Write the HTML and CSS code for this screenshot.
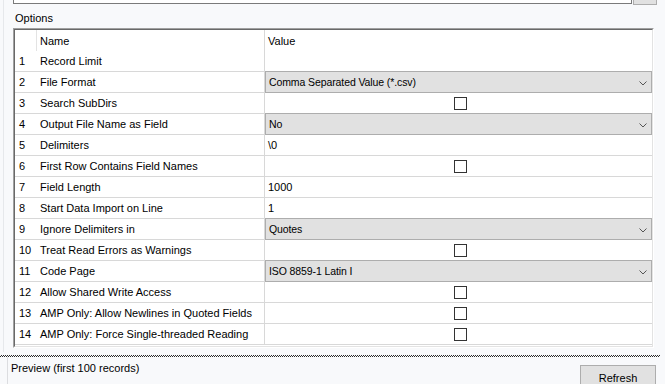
FILE: index.html
```html
<!DOCTYPE html>
<html>
<head>
<meta charset="utf-8">
<link rel="stylesheet" href="styles.css">
</head>
<body>
<div class="upper">
  <div class="topbar">
    <div class="tb-input"></div>
    <div class="tb-btn"></div>
  </div>
  <div class="options-label">Options</div>
  <div class="grid">
    <div class="grid-inner">
      <div class="row head">
        <div class="num"></div>
        <div class="name">Name</div>
        <div class="val">Value</div>
      </div>
      <div class="row"><div class="num">1</div><div class="name">Record Limit</div><div class="val"></div></div>
      <div class="row"><div class="num">2</div><div class="name">File Format</div><div class="combo"><span>Comma Separated Value (*.csv)</span><svg class="chev" width="8" height="5" viewBox="0 0 8 5"><path d="M0.5 0.5 L4 4 L7.5 0.5" fill="none" stroke="#555" stroke-width="1"/></svg></div></div>
      <div class="row"><div class="num">3</div><div class="name">Search SubDirs</div><div class="val center"><span class="check"></span></div></div>
      <div class="row"><div class="num">4</div><div class="name">Output File Name as Field</div><div class="combo"><span>No</span><svg class="chev" width="8" height="5" viewBox="0 0 8 5"><path d="M0.5 0.5 L4 4 L7.5 0.5" fill="none" stroke="#555" stroke-width="1"/></svg></div></div>
      <div class="row"><div class="num">5</div><div class="name">Delimiters</div><div class="val">\0</div></div>
      <div class="row"><div class="num">6</div><div class="name">First Row Contains Field Names</div><div class="val center"><span class="check"></span></div></div>
      <div class="row"><div class="num">7</div><div class="name">Field Length</div><div class="val">1000</div></div>
      <div class="row"><div class="num">8</div><div class="name">Start Data Import on Line</div><div class="val">1</div></div>
      <div class="row"><div class="num">9</div><div class="name">Ignore Delimiters in</div><div class="combo"><span>Quotes</span><svg class="chev" width="8" height="5" viewBox="0 0 8 5"><path d="M0.5 0.5 L4 4 L7.5 0.5" fill="none" stroke="#555" stroke-width="1"/></svg></div></div>
      <div class="row"><div class="num">10</div><div class="name">Treat Read Errors as Warnings</div><div class="val center"><span class="check"></span></div></div>
      <div class="row"><div class="num">11</div><div class="name">Code Page</div><div class="combo"><span>ISO 8859-1 Latin I</span><svg class="chev" width="8" height="5" viewBox="0 0 8 5"><path d="M0.5 0.5 L4 4 L7.5 0.5" fill="none" stroke="#555" stroke-width="1"/></svg></div></div>
      <div class="row"><div class="num">12</div><div class="name">Allow Shared Write Access</div><div class="val center"><span class="check"></span></div></div>
      <div class="row"><div class="num">13</div><div class="name">AMP Only: Allow Newlines in Quoted Fields</div><div class="val center"><span class="check"></span></div></div>
      <div class="row"><div class="num">14</div><div class="name">AMP Only: Force Single-threaded Reading</div><div class="val center"><span class="check"></span></div></div>
    </div>
  </div>
</div>
<div class="splitter"></div>
<div class="lower">
  <div class="preview-label">Preview (first 100 records)</div>
  <div class="refresh">Refresh</div>
</div>
</body>
</html>
```

FILE: styles.css
```css
html, body {
  margin: 0;
  padding: 0;
}
body {
  background: #f8f9fb;
  font-family: "Liberation Sans", Arial, sans-serif;
  font-size: 11px;
  color: #000;
  width: 665px;
  height: 384px;
  overflow: hidden;
}
.upper {
  margin-left: 3px;
  border-left: 1px solid #e6e8eb;
  height: 352px;
}
.topbar {
  display: flex;
  height: 5px;
  padding-left: 9px;
}
.tb-input {
  box-sizing: border-box;
  width: 619px;
  height: 4px;
  background: #fff;
  border: 1px solid #7a7a7a;
  border-top: none;
}
.tb-btn {
  box-sizing: border-box;
  width: 24px;
  height: 5px;
  margin-left: 1px;
  background: #e1e1e1;
  border: 1px solid #adadad;
  border-top: none;
}
.options-label {
  margin-top: 7px;
  padding-left: 11px;
  line-height: 13px;
  height: 13px;
}
.grid {
  margin-top: 3px;
  margin-left: 9px;
  width: 641px;
  box-sizing: border-box;
  border: 1px solid;
  border-color: #a0a0a0 #ffffff #ffffff #a0a0a0;
}
.grid-inner {
  border: 1px solid;
  border-color: #696969 #e3e3e3 #e3e3e3 #696969;
  background: #fff;
  padding-bottom: 1px;
}
.row {
  display: grid;
  grid-template-columns: 22px 228px 1fr;
  height: 21px;
  box-sizing: border-box;
  border-bottom: 1px solid #d8d8d8;
  line-height: 20px;
}
.row.head {
  border-bottom: none;
  padding-top: 1px;
}
.num {
  padding-left: 4px;
}
.head .num {
  border-right: 1px solid #e3e3e3;
  margin-top: -1px;
}
.name {
  padding-left: 3px;
  border-right: 1px solid #d8d8d8;
  white-space: nowrap;
}
.head .name {
  margin-top: -1px;
  padding-top: 1px;
}
.val {
  padding-left: 3px;
}
.val.center {
  display: flex;
  justify-content: center;
  align-items: center;
}
.check {
  display: block;
  width: 13px;
  height: 13px;
  box-sizing: border-box;
  border: 1px solid #333;
  background: #fff;
  margin-left: 1px;
}
.combo {
  position: relative;
  z-index: 1;
  margin: -1px 0 -1px 0;
  border: 1px solid #adadad;
  background: #e1e1e1;
  display: flex;
  align-items: center;
  justify-content: space-between;
  padding: 0 4px 0 3px;
  line-height: 20px;
  font-size: 10.5px;
  letter-spacing: -0.1px;
}
.chev {
  display: block;
  margin-top: 2px;
}
.splitter {
  margin-top: 3px;
  height: 2px;
  width: 660px;
  background-image: conic-gradient(#2a2a2a 25%, transparent 0 50%, #2a2a2a 0 75%, transparent 0);
  background-size: 2px 2px;
}
.lower {
  display: flex;
  align-items: flex-start;
  margin-left: 7px;
  border-left: 1px solid #dcdde0;
  height: 40px;
}
.preview-label {
  margin-top: 5px;
  padding-left: 3px;
  line-height: 13px;
}
.refresh {
  margin-left: auto;
  margin-right: 9px;
  margin-top: 8px;
  width: 76px;
  height: 27px;
  box-sizing: border-box;
  background: #e1e1e1;
  border: 1px solid #adadad;
  text-align: center;
  line-height: 24px;
}
```
